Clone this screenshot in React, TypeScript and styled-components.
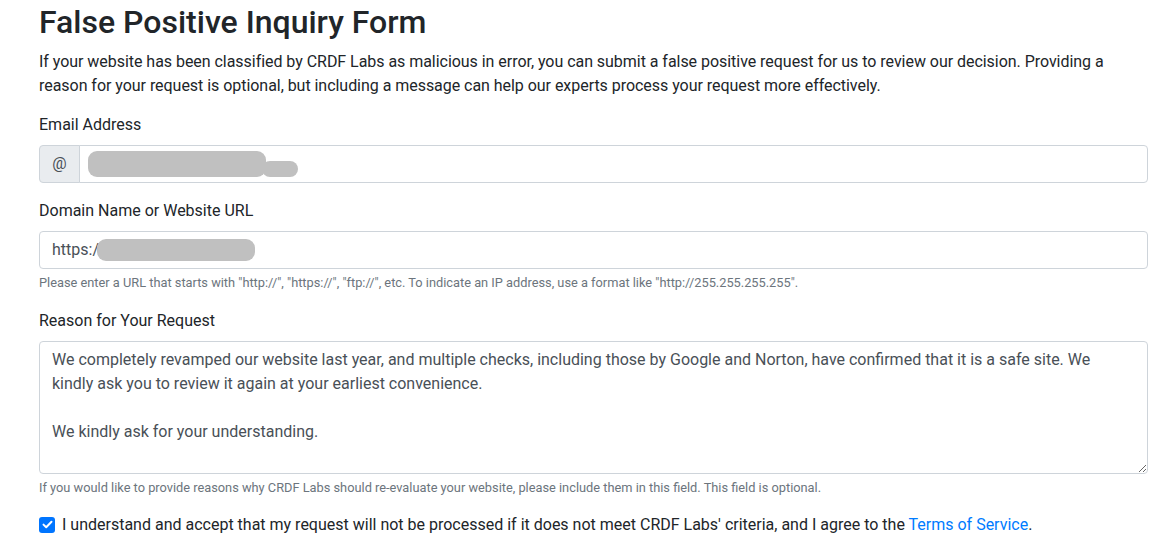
import React from "react";
import styled, { createGlobalStyle } from "styled-components";

const GlobalStyle = createGlobalStyle`
  html, body {
    margin: 0;
    padding: 0;
    background: #fff;
  }
  body {
    font-family: Roboto, "Noto Sans", sans-serif;
    font-size: 16px;
    line-height: 1.5;
    color: #212529;
  }
  * {
    box-sizing: border-box;
  }
`;

const Page = styled.div`
  width: 1109px;
  margin-left: 39px;
  padding-top: 3px;
`;

const Title = styled.h1`
  font-size: 32px;
  font-weight: 500;
  line-height: 1.2;
  margin: 0 0 9px;
`;

const Intro = styled.p`
  margin: 0 0 15px;
  letter-spacing: -0.04px;
`;

const FormGroup = styled.div`
  margin-bottom: 16px;
`;

const Label = styled.label`
  display: block;
  margin-bottom: 8px;
`;

const InputGroup = styled.div`
  display: flex;
  height: 38px;
`;

const Addon = styled.span`
  display: flex;
  align-items: center;
  justify-content: center;
  width: 41px;
  background: #e9ecef;
  border: 1px solid #ced4da;
  border-radius: 4px 0 0 4px;
  color: #495057;
`;

const Field = styled.div<{ $joined?: boolean }>`
  flex: 1;
  display: flex;
  align-items: center;
  height: 38px;
  padding: 0 12px;
  border: 1px solid #ced4da;
  border-radius: ${(p) => (p.$joined ? "0 4px 4px 0" : "4px")};
  margin-left: ${(p) => (p.$joined ? "-1px" : "0")};
  color: #495057;
  background: #fff;
`;

const Redacted = styled.span<{ $w: number; $h: number }>`
  display: inline-block;
  width: ${(p) => p.$w}px;
  height: ${(p) => p.$h}px;
  background: #c0c0c0;
  border-radius: 9px;
  filter: blur(0.6px);
`;

const RedactedPair = styled.span`
  display: flex;
  align-items: flex-end;
  margin-left: -4px;
`;

const TextArea = styled.textarea`
  display: block;
  width: 100%;
  height: 133px;
  padding: 6px 12px;
  border: 1px solid #ced4da;
  border-radius: 4px;
  font: inherit;
  line-height: 1.5;
  color: #495057;
  resize: vertical;
  outline: none;
`;

const Help = styled.small`
  display: block;
  margin-top: 4px;
  font-size: 12.8px;
  line-height: 1.5;
  color: #6c757d;
`;

const CheckRow = styled.label`
  display: flex;
  align-items: center;
  gap: 7px;
`;

const CheckBox = styled.span`
  display: flex;
  align-items: center;
  justify-content: center;
  width: 16px;
  height: 16px;
  border-radius: 3px;
  background: #0075ff;
  flex-shrink: 0;
`;

const Link = styled.a`
  color: #007bff;
  text-decoration: none;
`;

const App: React.FC = () => {
  return (
    <Page>
      <GlobalStyle />
      <Title>False Positive Inquiry Form</Title>
      <Intro>
        If your website has been classified by CRDF Labs as malicious in error, you can submit a
        false positive request for us to review our decision. Providing a reason for your request
        is optional, but including a message can help our experts process your request more
        effectively.
      </Intro>

      <FormGroup>
        <Label>Email Address</Label>
        <InputGroup>
          <Addon>@</Addon>
          <Field $joined>
            <RedactedPair>
              <Redacted $w={178} $h={26} />
              <Redacted $w={36} $h={16} style={{ marginLeft: -4 }} />
            </RedactedPair>
          </Field>
        </InputGroup>
      </FormGroup>

      <FormGroup>
        <Label>Domain Name or Website URL</Label>
        <Field>
          https:/
          <Redacted $w={158} $h={22} style={{ marginLeft: -2 }} />
        </Field>
        <Help>
          Please enter a URL that starts with "http://", "https://", "ftp://", etc. To indicate an
          IP address, use a format like "http://255.255.255.255".
        </Help>
      </FormGroup>

      <FormGroup>
        <Label>Reason for Your Request</Label>
        <TextArea
          readOnly
          defaultValue={
            "We completely revamped our website last year, and multiple checks, including those by Google and Norton, have confirmed that it is a safe site. We kindly ask you to review it again at your earliest convenience.\n\nWe kindly ask for your understanding."
          }
        />
        <Help>
          If you would like to provide reasons why CRDF Labs should re-evaluate your website,
          please include them in this field. This field is optional.
        </Help>
      </FormGroup>

      <CheckRow>
        <CheckBox>
          <svg width="11" height="9" viewBox="0 0 11 9" fill="none">
            <path d="M1.5 4.6 4.2 7.2 9.5 1.8" stroke="#fff" strokeWidth="2" strokeLinecap="round" strokeLinejoin="round" />
          </svg>
        </CheckBox>
        <span>
          I understand and accept that my request will not be processed if it does not meet CRDF
          Labs' criteria, and I agree to the <Link href="#">Terms of Service</Link>.
        </span>
      </CheckRow>
    </Page>
  );
};

export default App;
